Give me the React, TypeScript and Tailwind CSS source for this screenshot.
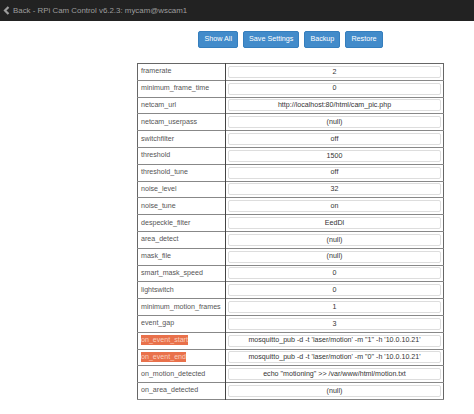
import React from "react";

const rows: [string, string, boolean?][] = [
  ["framerate", "2"],
  ["minimum_frame_time", "0"],
  ["netcam_url", "http://localhost:80/html/cam_pic.php"],
  ["netcam_userpass", "(null)"],
  ["switchfilter", "off"],
  ["threshold", "1500"],
  ["threshold_tune", "off"],
  ["noise_level", "32"],
  ["noise_tune", "on"],
  ["despeckle_filter", "EedDl"],
  ["area_detect", "(null)"],
  ["mask_file", "(null)"],
  ["smart_mask_speed", "0"],
  ["lightswitch", "0"],
  ["minimum_motion_frames", "1"],
  ["event_gap", "3"],
  ["on_event_start", "mosquitto_pub -d -t 'laser/motion' -m \"1\" -h '10.0.10.21'", true],
  ["on_event_end", "mosquitto_pub -d -t 'laser/motion' -m \"0\" -h '10.0.10.21'", true],
  ["on_motion_detected", "echo \"motioning\" >> /var/www/html/motion.txt"],
  ["on_area_detected", "(null)"],
];

const buttons = ["Show All", "Save Settings", "Backup", "Restore"];

export default function App() {
  return (
    <div className="min-h-[414px] bg-white font-['Liberation_Sans',Arial,sans-serif]">
      <header className="flex h-[21px] items-center gap-[3px] bg-[#222222] pl-[3px] text-[7.9px] text-[#9d9d9d]">
        <svg width="7" height="9" viewBox="0 0 7 9">
          <polyline points="5.5,1 2,4.5 5.5,8" fill="none" stroke="#9d9d9d" strokeWidth="2.2" />
        </svg>
        <span>Back - RPi Cam Control v6.2.3: mycam@wscam1</span>
      </header>

      <main className="flex flex-col items-center pl-[107px]">
        <div className="mt-[10px] flex gap-[5px]">
          {buttons.map((b) => (
            <button
              key={b}
              className="h-[17px] rounded-[2px] border border-[#357ebd] bg-[#428bca] px-[5px] text-[7.2px] text-white"
            >
              {b}
            </button>
          ))}
        </div>

        <table className="mt-[15px] w-[307px] border-collapse border border-[#666] text-[7.1px]">
          <tbody>
            {rows.map(([k, v, hl]) => (
              <tr key={k} className="h-[16.8px] border-b border-[#888]">
                <td className="w-[88px] border-r border-[#444] pl-[3px] leading-none text-[#555555]">
                  {hl ? (
                    <span className="bg-[#e9714b] py-[1px] text-[#f9d0bd]">{k}</span>
                  ) : (
                    k
                  )}
                </td>
                <td className="px-[2px] py-0">
                  <div className="flex h-[12px] items-center justify-center rounded-[2px] border border-[#dddddd] text-[#333333]">
                    {v}
                  </div>
                </td>
              </tr>
            ))}
          </tbody>
        </table>
      </main>
    </div>
  );
}
